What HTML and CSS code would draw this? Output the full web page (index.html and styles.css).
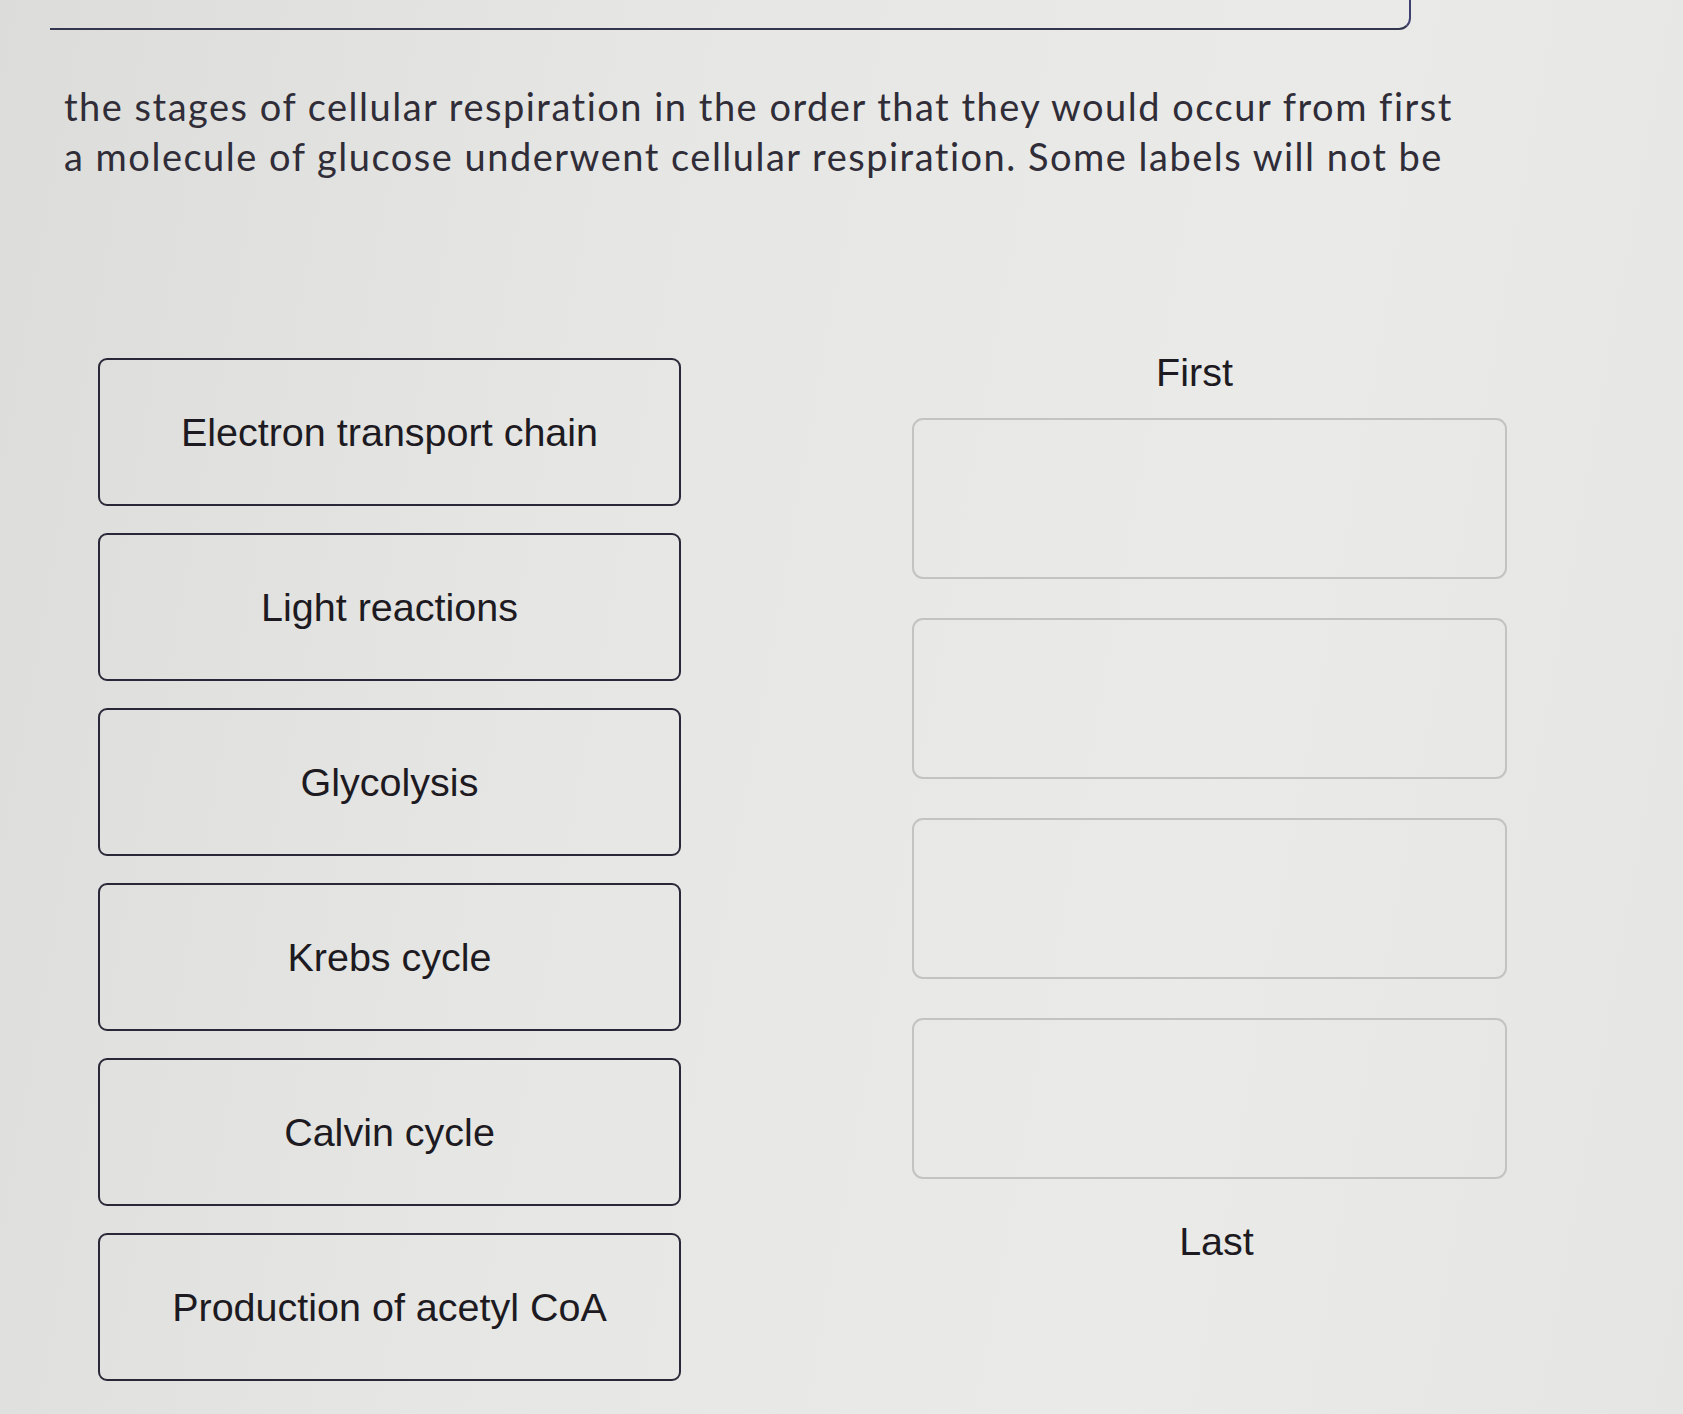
FILE: index.html
```html
<!DOCTYPE html>
<html>
<head>
    <title>Cellular Respiration Ordering</title>
    <link rel="stylesheet" href="styles.css">
</head>
<body>
    <div class="prev-box"></div>

    <p class="prompt">
        the stages of cellular respiration in the order that they would occur from first<br>
        a molecule of glucose underwent cellular respiration. Some labels will not be
    </p>

    <div class="board">
        <div class="labels">
            <div class="label">Electron transport chain</div>
            <div class="label">Light reactions</div>
            <div class="label">Glycolysis</div>
            <div class="label">Krebs cycle</div>
            <div class="label">Calvin cycle</div>
            <div class="label">Production of acetyl CoA</div>
        </div>

        <div class="targets">
            <div class="end-label">First</div>
            <div class="drop"></div>
            <div class="drop"></div>
            <div class="drop"></div>
            <div class="drop"></div>
            <div class="end-label last">Last</div>
        </div>
    </div>
</body>
</html>
```

FILE: styles.css
```css
body {
    margin: 0;
    width: 1683px;
    height: 1414px;
    overflow: hidden;
    background: linear-gradient(100deg, #dcdddb 0%, #e6e7e4 35%, #eaebe8 70%, #e5e6e3 100%);
    font-family: "Liberation Sans", Arial, sans-serif;
}
.prev-box {
    margin-left: 50px;
    width: 1359px;
    height: 28px;
    border-right: 2px solid #3e4070;
    border-bottom: 2px solid #34354f;
    border-bottom-right-radius: 12px;
}
.prompt {
    margin: 51px 0 0 64px;
    font-family: Lato, "Open Sans", sans-serif;
    font-size: 38px;
    line-height: 50px;
    letter-spacing: 1.5px;
    font-variant-ligatures: none;
    color: #302d38;
    white-space: nowrap;
}
.board {
    display: grid;
    grid-template-columns: 583px 595px;
    column-gap: 231px;
    margin: 168px 0 0 98px;
    align-items: start;
}
.labels {
    display: flex;
    flex-direction: column;
    gap: 27px;
    padding-top: 9px;
}
.label {
    height: 144px;
    display: flex;
    align-items: center;
    justify-content: center;
    border: 2px solid #2a2838;
    border-radius: 9px;
    font-size: 39.5px;
    color: #1d1a22;
}
.targets {
    display: flex;
    flex-direction: column;
    gap: 39px;
}
.end-label {
    font-size: 39.5px;
    line-height: 46px;
    text-align: center;
    color: #1d1a22;
    margin-bottom: -16px;
    margin-right: 30px;
}
.end-label.last {
    margin: 0 0 0 14px;
}
.drop {
    height: 157px;
    border: 2px solid #c3c4c2;
    border-radius: 11px;
}
```
